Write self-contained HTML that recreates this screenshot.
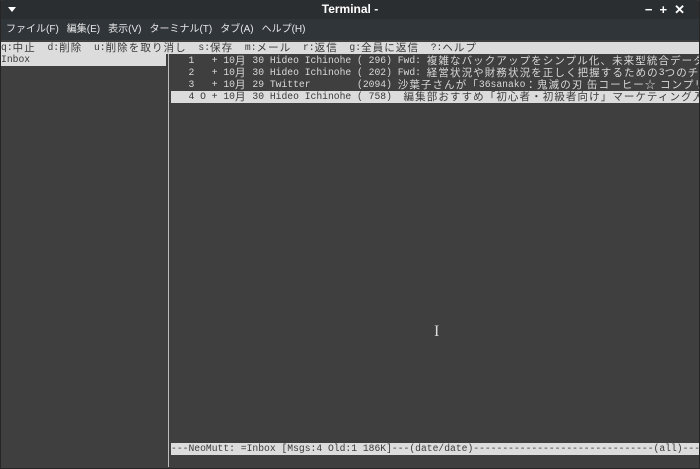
<!DOCTYPE html>
<html><head><meta charset="utf-8"><style>
*{margin:0;padding:0;box-sizing:border-box}
body{width:700px;height:469px;background:#3f3f3f;overflow:hidden;position:relative;font-family:"Liberation Sans","Noto Sans CJK JP",sans-serif}
#title{position:absolute;left:0;top:0;width:700px;height:19px;background:#2b2e31;color:#fff;font-weight:bold;font-size:12px;text-align:center;line-height:19px;border-radius:4px 4px 0 0}
#menu{position:absolute;left:0;top:19px;width:700px;height:21px;background:#30353a;color:#e8e8e8;font-size:10px;line-height:21px;padding-left:6px;word-spacing:0}
#menu span{margin-right:8px}
.t{position:absolute;font-family:"Liberation Mono",monospace;font-size:9.7px;line-height:12px;height:12px;white-space:pre;overflow:hidden;color:#d8d8d8}
.t b{font-weight:normal;font-family:"Noto Sans CJK JP",sans-serif;font-size:10.5px;letter-spacing:1.1px;line-height:12px;display:inline-block;height:12px;vertical-align:top}
.hl{background:#dcdcdc;color:#3a3a3a}
#div{position:absolute;left:168px;top:54px;width:1px;height:413px;background:#bdbdbd}
#frame{position:absolute;left:0;top:0;width:700px;height:469px;border:1px solid #262626;border-top:none;pointer-events:none}
</style></head><body>
<div id="title">Terminal -</div>
<div style="position:absolute;left:8px;top:7px;width:0;height:0;border-left:4px solid transparent;border-right:4px solid transparent;border-top:5px solid #fff"></div>
<div style="position:absolute;right:8px;top:2px;color:#fff;font-weight:bold;font-size:13px;letter-spacing:7px">−+✕</div>
<div id="menu"><span>ファイル(F)</span><span>編集(E)</span><span>表示(V)</span><span>ターミナル(T)</span><span>タブ(A)</span><span>ヘルプ(H)</span></div>
<div class="t hl" style="left:1px;top:42px;width:698px">q:<b>中止</b>  d:<b>削除</b>  u:<b>削除を取り消し</b>  s:<b>保存</b>  m:<b>メール</b>  r:<b>返信</b>  g:<b>全員に返信</b>  ?:<b>ヘルプ</b></div>
<div class="t hl" style="left:1px;top:54px;width:165px">Inbox</div>
<div id="div"></div>
<div class="t" style="left:171px;top:55px;width:528px">   1   + 10<b>月</b> 30 Hideo Ichinohe ( 296) Fwd: <b>複雑なバックアップをシンプル化、未来型統合データ</b></div>
<div class="t" style="left:171px;top:67px;width:528px">   2   + 10<b>月</b> 30 Hideo Ichinohe ( 202) Fwd: <b>経営状況や財務状況を正しく把握するための</b>3<b>つのチ</b>B</div>
<div class="t" style="left:171px;top:79px;width:528px">   3   + 10<b>月</b> 29 Twitter        (2094) <b>沙葉子さんが「</b>36sanako<b>：鬼滅の刃 缶コーヒー☆ コンプリ</b></div>
<div class="t hl" style="left:171px;top:91px;width:528px">   4 O + 10<b>月</b> 30 Hideo Ichinohe ( 758)  <b>編集部おすすめ「初心者・初級者向け」マーケティング入</b></div>
<div class="t hl" style="left:171px;top:443px;width:528px">---NeoMutt: =Inbox [Msgs:4 Old:1 186K]---(date/date)-------------------------------(all)---</div>
<div style="position:absolute;left:434px;top:323px;color:#ddd;font-family:'Liberation Serif',serif;font-size:16px">I</div>
<div id="frame"></div>
</body></html>
